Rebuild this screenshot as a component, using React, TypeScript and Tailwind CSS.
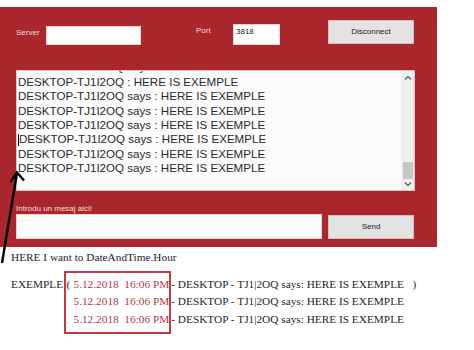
import React from 'react';

const ui = { fontFamily: '"Liberation Sans", Arial, sans-serif' };
const serif = { fontFamily: '"Liberation Serif", "Times New Roman", serif' };

const chatLines = [
  'DESKTOP-TJ1I2OQ says : HERE IS EXEMPLE',
  'DESKTOP-TJ1I2OQ : HERE IS EXEMPLE',
  'DESKTOP-TJ1I2OQ says : HERE IS EXEMPLE',
  'DESKTOP-TJ1I2OQ says : HERE IS EXEMPLE',
  'DESKTOP-TJ1I2OQ says : HERE IS EXEMPLE',
  'DESKTOP-TJ1I2OQ says : HERE IS EXEMPLE',
  'DESKTOP-TJ1I2OQ says : HERE IS EXEMPLE',
  'DESKTOP-TJ1I2OQ says : HERE IS EXEMPLE',
];

function ChatBox() {
  return (
    <div className="mt-[25px] flex h-[121px] w-[399px] border border-[#d8c4c4] bg-[#fbfbfb]">
      <div className="flex-1 overflow-hidden pl-[1px]">
        <div className="mt-[-10.6px] text-[11.6px] leading-[14.4px] text-[#2a2a2a] whitespace-nowrap" style={ui}>
          {chatLines.map((l, i) => (
            <div key={i} className="flex items-center">
              {i === 5 && <span className="inline-block h-[12px] w-0 border-l border-black" />}
              {l}
            </div>
          ))}
        </div>
      </div>
      <div className="flex w-[13px] flex-col items-center bg-[#efefef]">
        <svg width="8" height="6" viewBox="0 0 8 6" className="mt-[4px]">
          <path d="M1 4.5 L4 1.5 L7 4.5" stroke="#555" strokeWidth="1.2" fill="none" />
        </svg>
        <div className="mt-auto h-[17px] w-[10px] bg-[#c6c6c6]" />
        <svg width="8" height="6" viewBox="0 0 8 6" className="mb-[3px] mt-[2px]">
          <path d="M1 1.5 L4 4.5 L7 1.5" stroke="#555" strokeWidth="1.2" fill="none" />
        </svg>
      </div>
    </div>
  );
}

function Panel() {
  return (
    <div className="mt-[7px] h-[240px] w-[437px] bg-[#a9272d] px-[16px] pt-[13px]" style={ui}>
      <div className="flex items-start">
        <div className="mt-[7px] w-[30px] text-[8px] leading-[12px] text-[#f4dada]">Server</div>
        <div className="mt-[6px] h-[19px] w-[95px] border border-[#ead0d0] bg-white" />
        <div className="ml-[55px] mt-[5px] w-[37px] text-[8px] leading-[12px] text-[#f4dada]">Port</div>
        <div className="mt-[4px] h-[21px] w-[47px] border border-[#ead0d0] bg-white pl-[2px] pt-[2px] text-[8px] leading-[10px] text-[#222]">
          3818
        </div>
        <button className="ml-[48px] flex h-[24px] w-[86px] items-center justify-center border border-[#d3bcbc] bg-[#e3e3e3] text-[8px] text-[#1a1a1a]">
          Disconnect
        </button>
      </div>
      <ChatBox />
      <div className="mt-[12px] h-[11px] text-[8px] leading-[11px] text-[#f6dede]">Introdu un mesaj aici!</div>
      <div className="flex items-start">
        <div className="h-[25px] w-[306px] border border-[#ead0d0] bg-[#fcfcfc]" />
        <button className="ml-[6px] mt-[1px] flex h-[24px] w-[86px] items-center justify-center border border-[#d3bcbc] bg-[#e3e3e3] text-[8px] text-[#1a1a1a]">
          Send
        </button>
      </div>
    </div>
  );
}

const date = '5.12.2018  16:06 PM';
const rest = '- DESKTOP - TJ1|2OQ says: HERE IS EXEMPLE';

function Notes() {
  return (
    <div className="pl-[11px] text-[11.3px] text-[#1e1e1e]" style={serif}>
      <div className="mt-[2px] leading-[17.5px]">HERE I want to DateAndTime.Hour</div>
      <div className="mt-[4px] flex items-start leading-[17.5px]">
        <div className="mt-[5px] w-[53px]">EXEMPLE</div>
        <div className="border-2 border-[#c23a44] pb-[3.5px] pl-[0.5px] pt-[3px] text-[#b2363f] whitespace-pre">
          <div className="flex">
            <span className="w-[7px] text-[#1e1e1e]">(</span>
            <span>{date}</span>
          </div>
          <div className="flex">
            <span className="w-[7px]" />
            <span>{date}</span>
          </div>
          <div className="flex">
            <span className="w-[7px]" />
            <span>{date}</span>
          </div>
        </div>
        <div className="mt-[5px] whitespace-pre">
          <div>{rest + '   )'}</div>
          <div>{rest}</div>
          <div>{rest}</div>
        </div>
      </div>
    </div>
  );
}

export default function App() {
  return (
    <div className="relative h-[350px] w-[474px] overflow-hidden bg-white">
      <Panel />
      <Notes />
      <svg className="absolute left-0 top-0" width="474" height="350" viewBox="0 0 474 350">
        <path d="M2 263 L17 173" stroke="#000" strokeWidth="2.4" fill="none" />
        <path d="M10.5 182 L17 172.5 L24 180.5" stroke="#000" strokeWidth="2.4" fill="none" strokeLinejoin="miter" />
      </svg>
    </div>
  );
}
